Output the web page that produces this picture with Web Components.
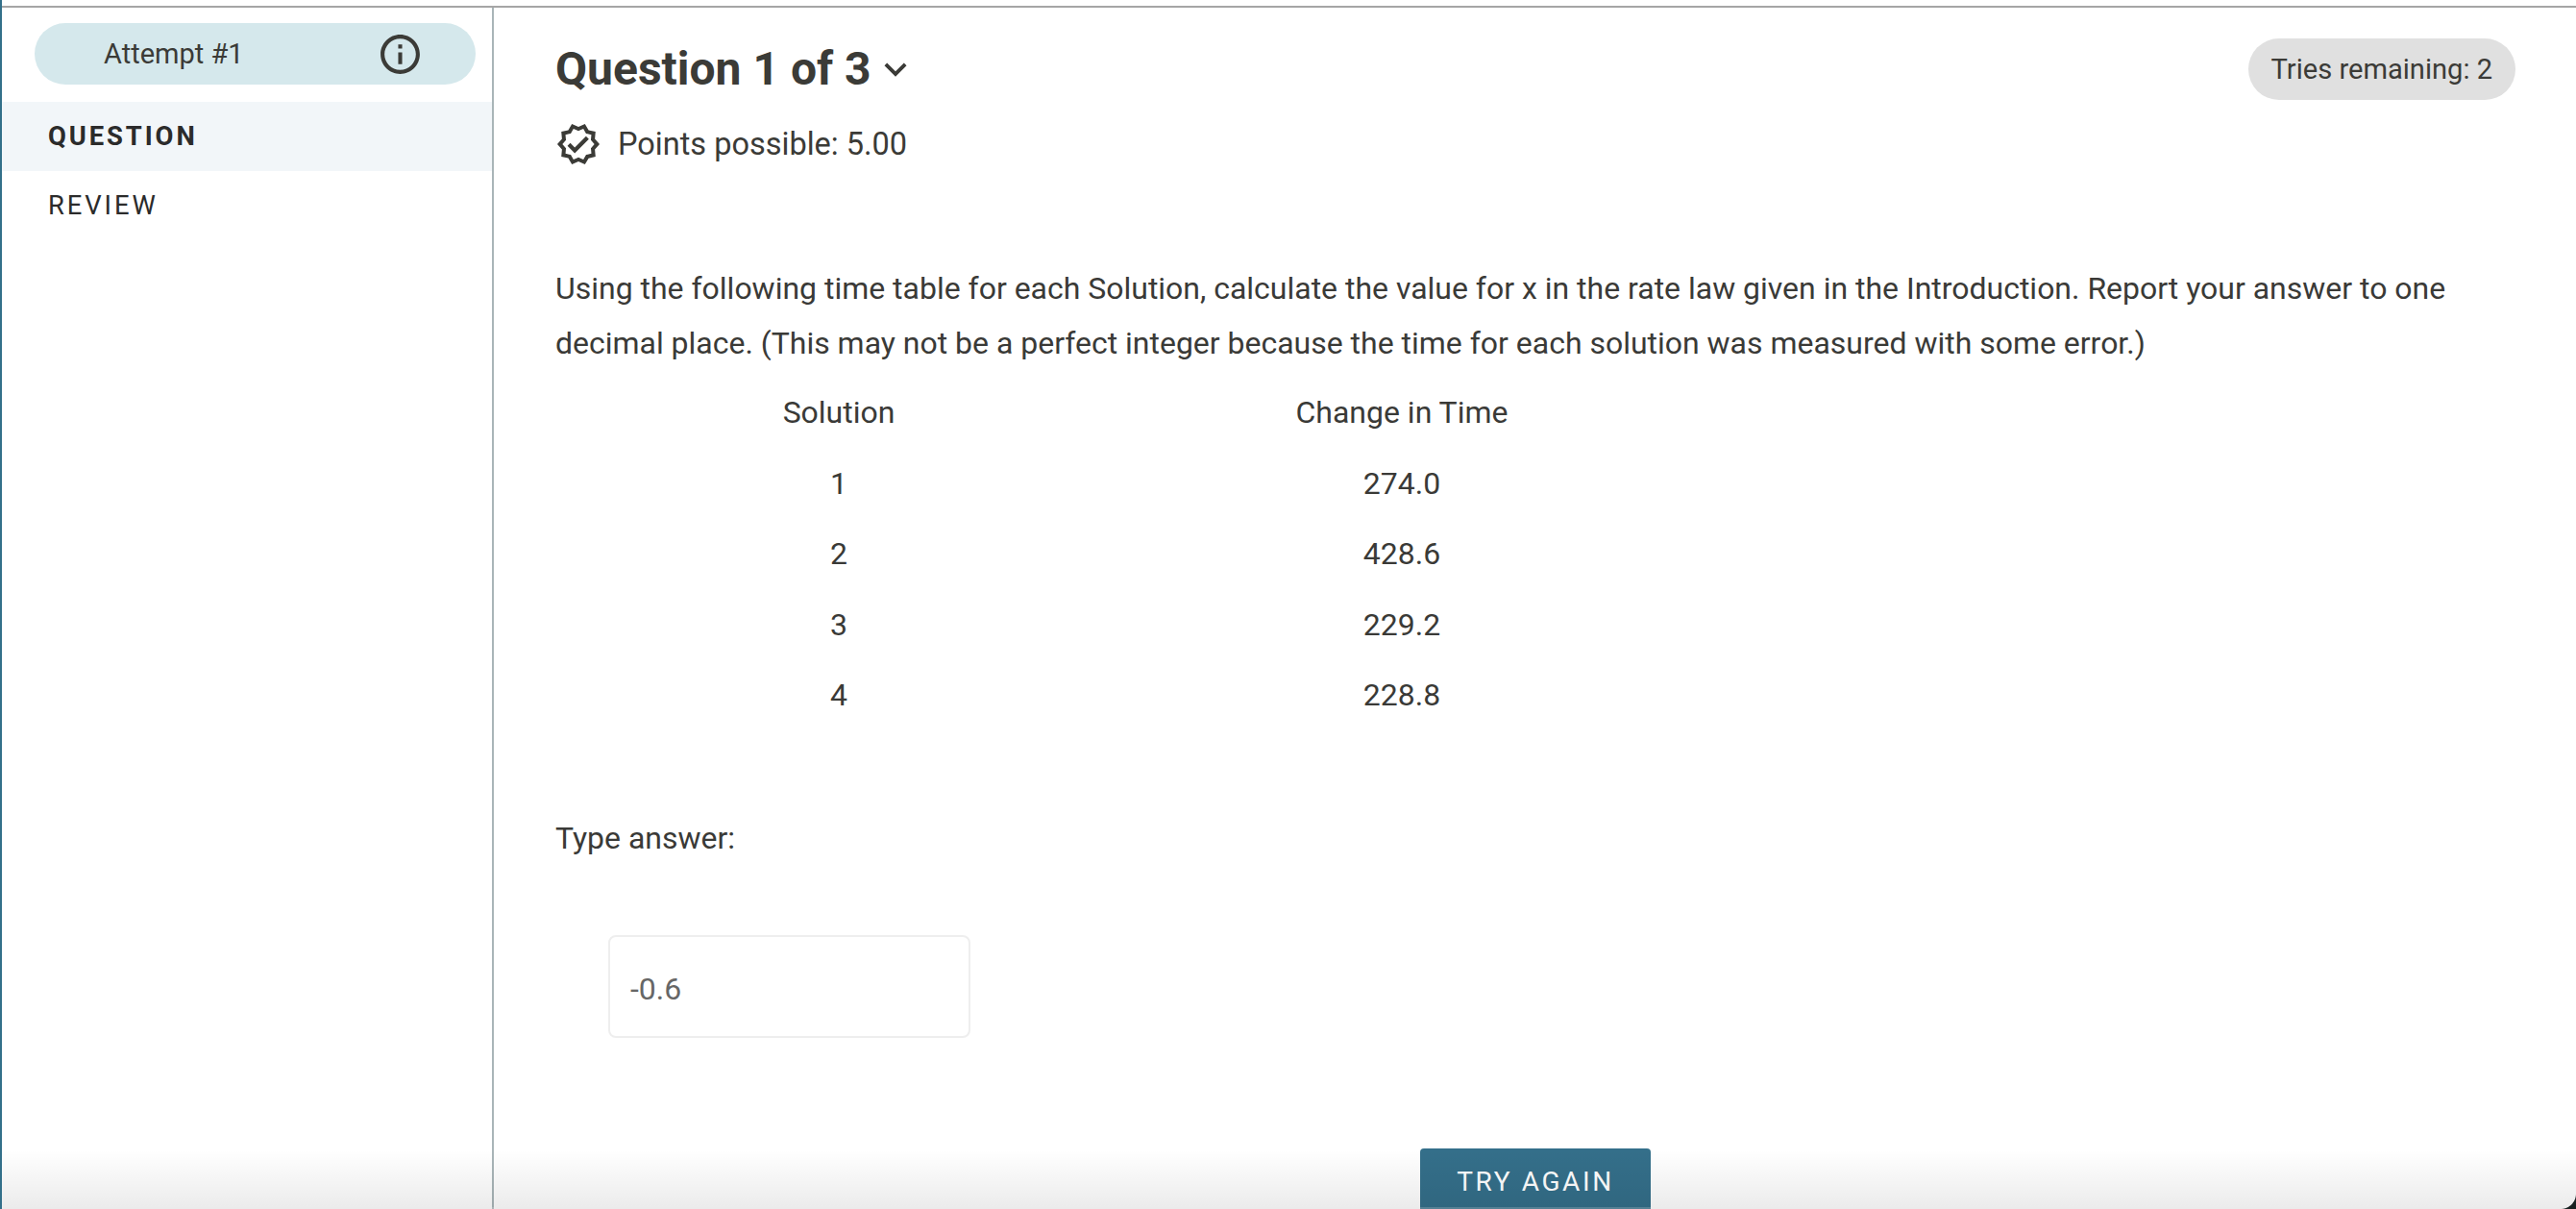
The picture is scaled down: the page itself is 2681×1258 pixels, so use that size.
<!DOCTYPE html>
<html>
<head>
<meta charset="utf-8">
<title>Question 1 of 3</title>
<style>
	html, body { margin: 0; height: 100%; overflow: hidden; background: #fff; }
	body { font-family: Roboto, "Liberation Sans", sans-serif; color: #3a3a37; }
</style>
</head>
<body>
<quiz-app>
	<quiz-sidebar slot="side">
		<attempt-pill>Attempt #1</attempt-pill>
		<side-tab active>QUESTION</side-tab>
		<side-tab>REVIEW</side-tab>
	</quiz-sidebar>
	<question-panel slot="main">
		<question-header></question-header>
		<p>Using the following time table for each Solution, calculate the value for x in the rate law given in the Introduction. Report your answer to one decimal place. (This may not be a perfect integer because the time for each solution was measured with some error.)</p>
		<time-table></time-table>
		<answer-box value="-0.6">Type answer:</answer-box>
		<try-button>TRY AGAIN</try-button>
	</question-panel>
</quiz-app>

<script>
/*
App frame
*/
const templateApp = document.createElement('template');
templateApp.innerHTML = `
	<style>
		:host {
			display: block;
			position: relative;
			height: 1258px;
			box-sizing: border-box;
			padding-top: 6px;
			border-left: 2px solid #33708a;
			overflow: hidden;
		}
		.frame {
			display: flex;
			height: 100%;
			box-sizing: border-box;
			border-top: 2px solid #a6a6a6;
		}
		.notch {
			position: absolute;
			left: -2px;
			top: 138px;
			width: 2px;
			height: 2px;
			background: #fff;
		}
		.fade {
			position: absolute;
			left: -2px;
			right: 0;
			bottom: 0;
			height: 62px;
			background: linear-gradient(rgba(0, 0, 0, 0), rgba(0, 0, 0, .08));
			pointer-events: none;
		}
		.edge {
			position: absolute;
			left: -2px;
			right: 0;
			bottom: 0;
			height: 2px;
			background: rgba(235, 235, 235, .2);
		}
		.corner {
			position: absolute;
			right: 0;
			bottom: 0;
			width: 16px;
			height: 16px;
			background: radial-gradient(circle at 0 0, transparent 15.5px, #172020 16.5px);
		}
	</style>
	<div class="frame">
		<slot name="side"></slot>
		<slot name="main"></slot>
	</div>
	<div class="notch"></div>
	<div class="fade"></div>
	<div class="edge"></div>
	<div class="corner"></div>
`;
class QuizApp extends HTMLElement {
	constructor() {
		super();
		this.attachShadow({ mode: 'open' });
		this.shadowRoot.appendChild(templateApp.content.cloneNode(true));
	}
}
customElements.define('quiz-app', QuizApp);

/*
Sidebar
*/
const templateSidebar = document.createElement('template');
templateSidebar.innerHTML = `
	<style>
		:host {
			display: block;
			flex: none;
			width: 512px;
			box-sizing: border-box;
			border-right: 2px solid #a9b5b8;
			padding-top: 16px;
		}
	</style>
	<slot></slot>
`;
class QuizSidebar extends HTMLElement {
	constructor() {
		super();
		this.attachShadow({ mode: 'open' });
		this.shadowRoot.appendChild(templateSidebar.content.cloneNode(true));
	}
}
customElements.define('quiz-sidebar', QuizSidebar);

const templatePill = document.createElement('template');
templatePill.innerHTML = `
	<style>
		:host {
			display: flex;
			align-items: center;
			justify-content: space-between;
			height: 64px;
			margin: 0 17px 18px 34px;
			padding: 0 54px 0 72px;
			border-radius: 32px;
			background: #d5e8ec;
			color: #3b3b37;
			font-size: 29px;
		}
		svg { width: 49px; height: 49px; fill: #3b3b37; display: block; }
	</style>
	<span><slot></slot></span>
	<svg viewBox="0 0 24 24"><path d="M11 7h2v2h-2zm0 4h2v6h-2zm1-9C6.48 2 2 6.48 2 12s4.48 10 10 10 10-4.48 10-10S17.52 2 12 2zm0 18c-4.41 0-8-3.59-8-8s3.59-8 8-8 8 3.59 8 8-3.59 8-8 8z"/></svg>
`;
class AttemptPill extends HTMLElement {
	constructor() {
		super();
		this.attachShadow({ mode: 'open' });
		this.shadowRoot.appendChild(templatePill.content.cloneNode(true));
	}
}
customElements.define('attempt-pill', AttemptPill);

const templateTab = document.createElement('template');
templateTab.innerHTML = `
	<style>
		:host {
			display: flex;
			align-items: center;
			height: 72px;
			padding-left: 48px;
			font-size: 27.4px;
			letter-spacing: 2.9px;
			color: #2b2b2b;
		}
		:host([active]) {
			background: #f2f6f9;
			font-weight: 700;
		}
	</style>
	<slot></slot>
`;
class SideTab extends HTMLElement {
	constructor() {
		super();
		this.attachShadow({ mode: 'open' });
		this.shadowRoot.appendChild(templateTab.content.cloneNode(true));
	}
}
customElements.define('side-tab', SideTab);

/*
Question panel
*/
const templatePanel = document.createElement('template');
templatePanel.innerHTML = `
	<style>
		:host {
			display: block;
			flex: 1;
			min-width: 0;
			box-sizing: border-box;
			padding: 0 63px 0 64px;
			font-size: 31.97px;
			line-height: 57px;
		}
		::slotted(p) {
			margin: 0 0 7px;
		}
	</style>
	<slot></slot>
`;
class QuestionPanel extends HTMLElement {
	constructor() {
		super();
		this.attachShadow({ mode: 'open' });
		this.shadowRoot.appendChild(templatePanel.content.cloneNode(true));
	}
}
customElements.define('question-panel', QuestionPanel);

const templateHeader = document.createElement('template');
templateHeader.innerHTML = `
	<style>
		:host {
			display: grid;
			grid-template-columns: 1fr auto;
			align-items: start;
			height: 264px;
			color: #3b3b37;
		}
		.title {
			display: flex;
			align-items: center;
			height: 64px;
			margin-top: 32px;
			font-size: 48px;
			font-weight: 700;
			line-height: 64px;
		}
		.title svg { width: 46px; height: 46px; margin: 0 0 0 2px; fill: #3b3b37; }
		.points {
			display: flex;
			align-items: center;
			gap: 17px;
			margin-top: 22px;
			font-size: 32.5px;
			line-height: 48px;
		}
		.points svg { width: 48px; height: 48px; fill: #3b3b37; }
		.tries {
			margin: 32px 0 0;
			padding: 0 24px;
			height: 64px;
			line-height: 64px;
			border-radius: 32px;
			background: #e0e0e0;
			font-size: 29.1px;
		}
	</style>
	<div>
		<div class="title">Question 1 of 3<svg viewBox="0 0 24 24"><path d="M16.59 8.59L12 13.17 7.41 8.59 6 10l6 6 6-6z"/></svg></div>
		<div class="points">
			<svg viewBox="0 0 24 24"><path d="M23 11.99l-2.44-2.79.34-3.69-3.61-.82L15.4 1.5 12 2.96 8.6 1.5 6.71 4.69 3.1 5.5l.34 3.7L1 11.99l2.44 2.79-.34 3.7 3.61.82 1.89 3.2L12 21.04l3.4 1.47 1.89-3.19 3.61-.82-.34-3.69L23 11.99zm-3.95 1.48l-.56.65.08.85.18 1.95-1.9.43-.84.19-.44.74-.99 1.68-1.78-.77-.79-.34-.79.34-1.78.77-.99-1.67-.44-.74-.84-.19-1.9-.43.18-1.96.08-.85-.56-.65L3.67 12l1.29-1.48.56-.65-.09-.86-.18-1.94 1.9-.43.84-.19.44-.74.99-1.68 1.78.77.79.34.79-.34 1.78-.77.99 1.68.44.74.84.19 1.9.43-.18 1.95-.08.85.56.65 1.29 1.47-1.28 1.48z"/><path d="M10.09 13.75l-2.32-2.33-1.48 1.49 3.8 3.81 7.34-7.36-1.48-1.49z"/></svg>
			<span>Points possible: 5.00</span>
		</div>
	</div>
	<div class="tries">Tries remaining: 2</div>
`;
class QuestionHeader extends HTMLElement {
	constructor() {
		super();
		this.attachShadow({ mode: 'open' });
		this.shadowRoot.appendChild(templateHeader.content.cloneNode(true));
	}
}
customElements.define('question-header', QuestionHeader);

/*
Time table, rows come from the array below
*/
const timeRows = [
	['Solution', 'Change in Time'],
	['1', '274.0'],
	['2', '428.6'],
	['3', '229.2'],
	['4', '228.8'],
];
class TimeTable extends HTMLElement {
	constructor() {
		super();
		this.attachShadow({ mode: 'open' });
		const cells = timeRows.map(row => row.map(text => `<div>${text}</div>`).join('')).join('');
		this.shadowRoot.innerHTML = `
			<style>
				:host {
					display: grid;
					grid-template-columns: 590px 582px;
					grid-auto-rows: 73.5px;
					align-items: center;
					text-align: center;
				}
			</style>
			${cells}
		`;
	}
}
customElements.define('time-table', TimeTable);

/*
Answer
*/
const templateAnswer = document.createElement('template');
templateAnswer.innerHTML = `
	<style>
		:host {
			display: block;
			margin-top: 83px;
		}
		.box {
			box-sizing: border-box;
			width: 377px;
			height: 107px;
			margin: 72px 0 0 54.5px;
			padding: 6px 21.5px 0;
			border: 2px solid #eee;
			border-radius: 8px;
			display: flex;
			align-items: center;
			color: #666;
		}
	</style>
	<div><slot></slot></div>
	<div class="box"></div>
`;
class AnswerBox extends HTMLElement {
	constructor() {
		super();
		this.attachShadow({ mode: 'open' });
		this.shadowRoot.appendChild(templateAnswer.content.cloneNode(true));
		this.shadowRoot.querySelector('.box').textContent = this.getAttribute('value');
	}
}
customElements.define('answer-box', AnswerBox);

const templateButton = document.createElement('template');
templateButton.innerHTML = `
	<style>
		:host {
			display: block;
			text-align: center;
			margin-top: 115px;
		}
		button {
			display: inline-block;
			vertical-align: top;
			width: 240px;
			height: 70px;
			padding: 0;
			border: 0;
			border-radius: 4px 4px 0 0;
			background: #346f8a;
			color: #fff;
			font: 28px Roboto, sans-serif;
			letter-spacing: 2.6px;
		}
	</style>
	<button><slot></slot></button>
`;
class TryButton extends HTMLElement {
	constructor() {
		super();
		this.attachShadow({ mode: 'open' });
		this.shadowRoot.appendChild(templateButton.content.cloneNode(true));
	}
}
customElements.define('try-button', TryButton);
</script>
</body>
</html>
